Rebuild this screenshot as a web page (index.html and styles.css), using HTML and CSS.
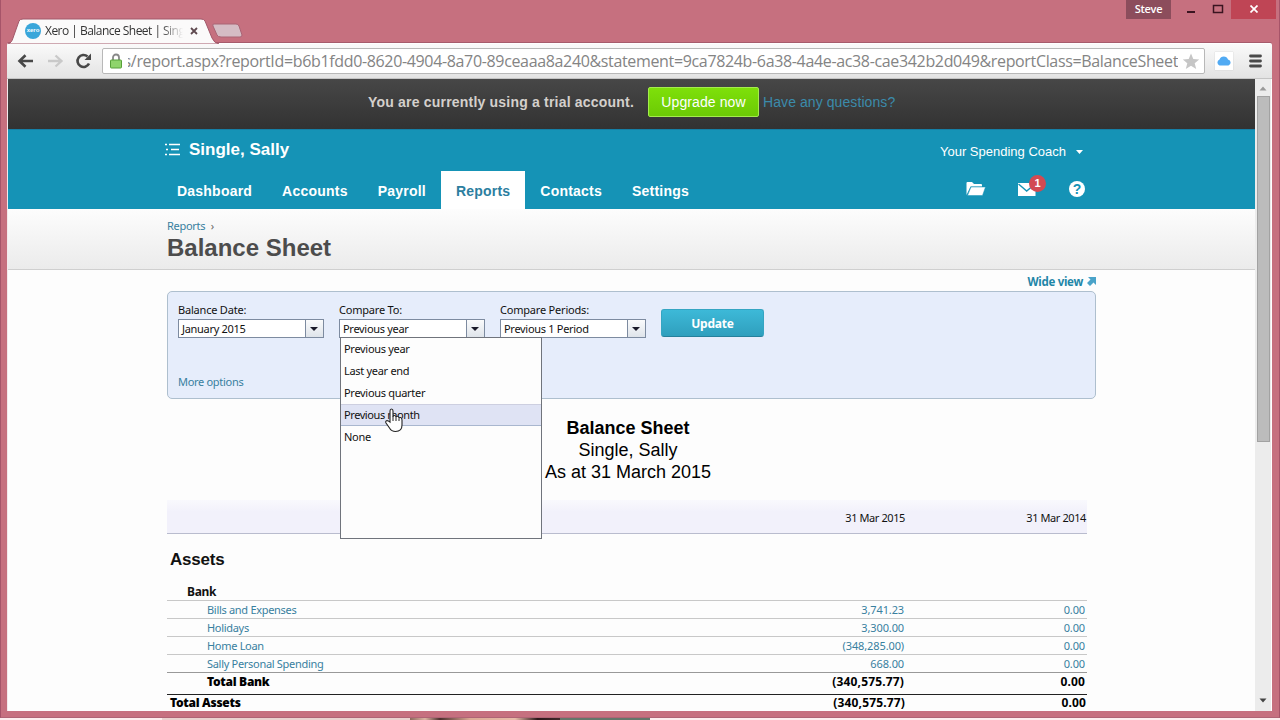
FILE: index.html
```html
<!DOCTYPE html>
<html lang="en">
<head>
  <meta charset="UTF-8">
  <meta name="viewport" content="width=device-width, initial-scale=1.0">
  <title>Xero | Balance Sheet | Single, Sally</title>
  <link rel="stylesheet" href="styles.css">
</head>
<body>

<div class="window">
  <!-- Title bar -->
  <div class="titlebar">
    <svg class="tab-shapes" width="260" height="26" viewBox="0 0 260 26">
      <path d="M0 26 C3 25 4 23 5 20 L11 3 Q12 1 15 1 L193 1 Q196 1 197 3 L204 20 Q206 25 211 26 Z" fill="#fbfafa" stroke="#a2596a" stroke-width="1"/>
      <path d="M206 6 H228 Q230 6 231 8 L234 17 Q234 19 232 19 H213 Q210 19 209 17 L205 8 Q204 6 206 6 Z" fill="#d5bcc4" stroke="#a96475" stroke-width="1"/>
    </svg>
    <div class="tab">
      <span class="favicon">xero</span>
      <span class="tab-title">Xero | Balance Sheet | Single</span>
      <svg class="tab-close" width="8" height="8" viewBox="0 0 8 8"><path d="M1 1 L7 7 M7 1 L1 7" stroke="#5f4a50" stroke-width="1.8"/></svg>
    </div>
    <div class="window-buttons">
      <span class="user">Steve</span>
      <svg width="60" height="18" viewBox="0 0 60 18">
        <path d="M16 12 H24" stroke="#3a1420" stroke-width="2"/>
        <rect x="42.5" y="5.5" width="9" height="7" fill="none" stroke="#3a1420" stroke-width="1.5"/>
      </svg>
      <span class="close"><svg width="8" height="8" viewBox="0 0 8 8"><path d="M0.5 0.5 L7.5 7.5 M7.5 0.5 L0.5 7.5" stroke="#fff" stroke-width="1.7"/></svg></span>
    </div>
  </div>

  <!-- Browser toolbar -->
  <div class="toolbar">
    <svg class="nav-icons" width="86" height="20" viewBox="0 0 86 20">
      <path d="M26 10 H13 M18.500 4.300 L12.500 10 L18.500 15.700" fill="none" stroke="#484848" stroke-width="2.600"/>
      <path d="M41 10 H54 M48.500 4.500 L54.500 10 L48.500 15.500" fill="none" stroke="#c9c9c9" stroke-width="2.300"/>
      <path d="M82 12.500 A6 6 0 1 1 80.500 5.500" fill="none" stroke="#484848" stroke-width="2.600"/>
      <path d="M84 2.500 V9 H77.500 Z" fill="#484848"/>
    </svg>
    <div class="omnibox">
      <svg class="lock" width="12" height="16" viewBox="0 0 12 16">
        <path d="M3 8 V4.500 A3 3 0 0 1 9 4.500 V8" fill="none" stroke="#888" stroke-width="1.800"/>
        <rect x="0.500" y="7" width="11" height="8" rx="0.800" fill="#8fd46c" stroke="#57a03a"/>
      </svg>
      <span class="url"><span>s/report.aspx?reportId=b6b1fdd0-8620-4904-8a70-89ceaaa8a240&amp;statement=9ca7824b-6a38-4a4e-ac38-cae342b2d049&amp;reportClass=BalanceSheet</span></span>
      <svg width="18" height="17" viewBox="0 0 18 17"><path d="M9 0.500 L11.300 6 L17.200 6.400 L12.700 10.200 L14.200 16 L9 12.800 L3.800 16 L5.300 10.200 L0.800 6.400 L6.700 6 Z" fill="#c6c6c6"/></svg>
    </div>
    <span class="cloud">
      <svg width="16" height="12" viewBox="0 0 16 12"><path d="M3.500 10.500 A3.200 3.200 0 0 1 3.500 4.500 A4.500 4.500 0 0 1 12 4.500 A3.100 3.100 0 0 1 12.500 10.500 Z" fill="#51aaf3"/></svg>
    </span>
    <svg class="menu-icon" width="13" height="14" viewBox="0 0 13 14"><path d="M1.500 2 H11.500 M1.500 7 H11.500 M1.500 12 H11.500" stroke="#4a4a4a" stroke-width="2.800" stroke-linecap="round"/></svg>
  </div>

  <div class="viewport">
    <div class="page">
      <div class="trial">
        <span class="trial-text">You are currently using a trial account.</span>
        <a class="upgrade">Upgrade now</a>
        <a class="questions">Have any questions?</a>
      </div>

      <!-- Header -->
      <div class="header">
        <div class="header-top">
          <svg class="list-icon" width="16" height="13" viewBox="0 0 16 13"><path d="M0 1.500 H2 M4 1.500 H15 M1 6.500 H3 M6 6.500 H14 M0 11.500 H2 M4 11.500 H15" stroke="#fff" stroke-width="1.700"/></svg>
          <span class="org">Single, Sally</span>
          <span class="account">Your Spending Coach</span>
          <svg class="account-arrow" width="7" height="4" viewBox="0 0 7 4"><path d="M0 0 H7 L3.500 4 Z" fill="#fff"/></svg>
        </div>
        <div class="nav">
          <a>Dashboard</a>
          <a>Accounts</a>
          <a>Payroll</a>
          <a class="active">Reports</a>
          <a>Contacts</a>
          <a>Settings</a>
          <div class="nav-tools">
            <svg width="20" height="16" viewBox="0 0 20 16"><path d="M0.500 14 V2 Q0.500 1 1.500 1 H6 L8 3 H15 Q16 3 16 4 V5.500 H4.500 Z" fill="#fff"/><path d="M5 6 H19.500 L16.500 14.500 H1.500 Z" fill="#fff" stroke="#1793b6" stroke-width="0.500"/></svg>
            <span class="mail">
              <svg width="18" height="13" viewBox="0 0 18 13"><rect x="0" y="0" width="17.500" height="13" fill="#fff"/><path d="M0.500 1 L8.700 8 L17 1" fill="none" stroke="#1793b6" stroke-width="1.400"/></svg>
              <span class="count">1</span>
            </span>
            <span class="help">?</span>
          </div>
        </div>
      </div>

      <div class="heading">
        <div class="crumb"><a>Reports</a> <span>›</span></div>
        <h1>Balance Sheet</h1>
      </div>

      <div class="content">
        <div class="wide-view">
          <a>Wide view</a>
          <svg width="9" height="9" viewBox="0 0 9 9"><path d="M1 0 H9 V8 L6.500 5.500 L3 9 L0 6 L3.500 2.500 Z" fill="#4aa3c9"/></svg>
        </div>

        <!-- Report options -->
        <div class="options">
          <div class="fields">
            <div class="field">
              <label>Balance Date:</label>
              <div class="select"><span>January 2015</span><i></i></div>
            </div>
            <div class="field">
              <label>Compare To:</label>
              <div class="select"><span>Previous year</span><i></i></div>
              <div class="dropdown">
                <div>Previous year</div>
                <div>Last year end</div>
                <div>Previous quarter</div>
                <div class="selected">Previous month</div>
                <div>None</div>
                <svg class="cursor" width="18" height="25" viewBox="0 0 18 25"><path d="M5 14 V3 Q5 1 6.500 1 Q8 1 8 3 V9 Q8 7.500 9.500 7.500 Q11 7.500 11 9.500 Q11.200 8.300 12.500 8.300 Q14 8.300 14 10.300 Q14.300 9.300 15.500 9.500 Q17 9.800 17 12 V17 Q17 23.500 10.500 23.500 Q6.500 23.500 4.500 20 L1 15 Q0.200 13.300 1.500 12.700 Q2.800 12.200 5 14 Z" fill="#fff" stroke="#222" stroke-width="1.100"/><path d="M8 8.500 V13 M11 9.500 V13 M14 10.500 V13" stroke="#222"/></svg>
              </div>
            </div>
            <div class="field">
              <label>Compare Periods:</label>
              <div class="select"><span>Previous 1 Period</span><i></i></div>
            </div>
            <button class="update">Update</button>
          </div>
          <a class="more">More options</a>
        </div>

        <div class="report-title">
          <b>Balance Sheet</b>
          <span>Single, Sally</span>
          <span class="as-at">As at 31 March 2015</span>
        </div>

        <!-- Report -->
        <div class="report">
          <div class="row columns"><span></span><span>31 Mar 2015</span><span>31 Mar 2014</span></div>
          <h2>Assets</h2>
          <h3>Bank</h3>
          <div class="row"><a>Bills and Expenses</a><span>3,741.23</span><span>0.00</span></div>
          <div class="row"><a>Holidays</a><span>3,300.00</span><span>0.00</span></div>
          <div class="row"><a>Home Loan</a><span>(348,285.00)</span><span>0.00</span></div>
          <div class="row"><a>Sally Personal Spending</a><span>668.00</span><span>0.00</span></div>
          <div class="row subtotal"><b>Total Bank</b><span>(340,575.77)</span><span>0.00</span></div>
          <div class="row total"><b>Total Assets</b><span>(340,575.77)</span><span>0.00</span></div>
        </div>
      </div>
    </div>
    <div class="scrollbar">
      <svg width="8" height="5" viewBox="0 0 8 5"><path d="M4 0.500 L7.500 4.500 H0.500 Z" fill="#999"/></svg>
      <div class="thumb"></div>
      <svg class="down" width="8" height="5" viewBox="0 0 8 5"><path d="M0.500 0.500 H7.500 L4 4.500 Z" fill="#444"/></svg>
    </div>
  </div>
</div>
<div class="desktop"><i class="strip-pink"></i><i class="strip-photo"></i><i class="strip-green"></i></div>

</body>
</html>
```
FILE: styles.css
```css
* {
  box-sizing: border-box;
}

body {
  margin: 0;
  width: 1280px;
  height: 720px;
  overflow: hidden;
  background-color: #fbecec;
  font-family: "Noto Sans", sans-serif;
  font-size: 11px;
  color: #111;
}

.window {
  height: 718px;
  padding: 0 7px 6px 6px;
  background-color: #c6707f;
  border-left: 1px solid #a65469;
  border-right: 1px solid #a65469;
  border-bottom: 1px solid #b06475;
}

.titlebar {
  position: relative;
  display: flex;
  justify-content: space-between;
  height: 43px;
}

.tab-shapes {
  position: absolute;
  left: 1px;
  top: 18px;
}

.tab {
  position: relative;
  display: flex;
  align-items: center;
  margin: 19px 0 0 18px;
  width: 174px;
  height: 24px;
}

.favicon {
  width: 16px;
  height: 16px;
  border-radius: 50%;
  background-color: #3aa6da;
  color: #fff;
  font: bold 6px/15px "Liberation Sans", sans-serif;
  text-align: center;
}

.tab-title {
  width: 138px;
  margin-left: 4px;
  overflow: hidden;
  white-space: nowrap;
  font: 12px/18px "Open Sans", sans-serif;
  letter-spacing: -0.53px;
  color: #333;
  -webkit-mask-image: linear-gradient(to right, #000 84%, transparent);
  mask-image: linear-gradient(to right, #000 84%, transparent);
}

.tab-close {
  margin-left: 7px;
}

.window-buttons {
  display: flex;
  align-items: flex-start;
  margin-right: -4px;
}

.user {
  width: 45px;
  height: 19px;
  background-color: #8c4d5c;
  color: #fff;
  font: 600 11px/18px "Open Sans", sans-serif;
  text-align: center;
  letter-spacing: -0.3px;
}

.close {
  width: 45px;
  height: 19px;
  background-color: #bf4555;
  text-align: center;
  line-height: 17px;
}

.toolbar {
  display: flex;
  align-items: center;
  height: 36px;
  background: linear-gradient(#fafafa, #e3e3e3);
  border-top: 1px solid #fff;
  border-bottom: 1px solid #c4c4c4;
  box-shadow: 0 -1px 0 #a65b6c;
  border-radius: 2px 2px 0 0;
}

.nav-icons {
  margin-right: 9px;
}

.omnibox {
  display: flex;
  align-items: center;
  width: 1103px;
  height: 26px;
  padding: 0 4px 0 7px;
  background-color: #fff;
  border: 1px solid #b8b8b8;
  border-radius: 2px;
}

.lock {
  flex: none;
}

.url {
  display: flex;
  justify-content: flex-end;
  width: 1050px;
  height: 24px;
  margin: 0 4px 0 6px;
  overflow: hidden;
  white-space: nowrap;
  font: 16px/24px "Open Sans", sans-serif;
  letter-spacing: -0.345px;
  color: #848484;
}

.cloud {
  display: flex;
  align-items: center;
  justify-content: center;
  width: 18px;
  height: 18px;
  margin: 0 16px 0 10px;
  background-color: #fff;
  box-shadow: 0 0 1px #bbb;
}

.viewport {
  display: flex;
  height: 632px;
  background-color: #fdfdfd;
  border-left: 1px solid #f4e9ec;
  overflow: hidden;
}

.page {
  width: 1247px;
}

.trial {
  display: flex;
  align-items: center;
  height: 50px;
  padding: 0 0 4px 360px;
  background: linear-gradient(#474747, #323232);
  font-family: "Liberation Sans", sans-serif;
  font-size: 14px;
}

.trial-text {
  width: 280px;
  font-weight: bold;
  letter-spacing: 0.2px;
  color: #d4d0cc;
}

.upgrade {
  width: 111px;
  height: 30px;
  background: linear-gradient(#7ee00a, #6cca05);
  border: 1px solid #a4ed4d;
  border-radius: 2px;
  line-height: 28px;
  letter-spacing: 0.1px;
  text-align: center;
}

.header {
  height: 80px;
  padding-left: 154px;
  background-color: #1593b6;
  border-top: 1px solid #157fa6;
  font-family: "Liberation Sans", sans-serif;
  color: #fff;
}

.header-top {
  display: flex;
  align-items: center;
  width: 921px;
  height: 41px;
  padding: 0 0 2px 3px;
}

.org {
  margin-left: 8px;
  font-size: 17px;
  font-weight: bold;
}

.account {
  margin: 4px 10px 0 auto;
  font-size: 13px;
}

.account-arrow {
  margin-top: 4px;
}

.nav {
  display: flex;
  width: 931px;
  height: 38px;
  font-size: 14px;
  font-weight: bold;
  line-height: 41px;
}

.nav a {
  padding: 0 15px;
  letter-spacing: 0.22px;
}

.nav-tools {
  display: flex;
  align-items: center;
  margin: 0 8px 2px auto;
}

.mail {
  position: relative;
  display: flex;
  margin: 0 33px 0 32px;
}

.count {
  position: absolute;
  left: 11px;
  top: -8px;
  width: 17px;
  height: 17px;
  border-radius: 50%;
  background-color: #d24a52;
  font-size: 11px;
  line-height: 16px;
  text-align: center;
}

.help {
  width: 16px;
  height: 16px;
  border-radius: 50%;
  background-color: #fff;
  color: #1593b6;
  font-size: 14px;
  line-height: 16px;
  text-align: center;
}

.heading {
  height: 61px;
  padding: 9px 0 0 159px;
  background: linear-gradient(#fdfdfd, #ebebeb);
  border-bottom: 1px solid #cfcfcf;
}

.crumb {
  height: 16px;
  line-height: 16px;
  letter-spacing: -0.3px;
  color: #666;
}

.crumb span {
  margin-left: 3px;
}

a {
  color: #38809f;
}

.nav a,
.upgrade {
  color: #fff;
}

.nav .active {
  background-color: #fff;
  color: #2b7e9f;
}

.questions {
  margin-left: 4px;
  letter-spacing: 0.08px;
  color: #3b8bab;
}

h1 {
  margin: 0;
  font: bold 24px/28px "Liberation Sans", sans-serif;
  color: #4c4c4c;
}

.content {
  width: 929px;
  margin-left: 159px;
}

.wide-view {
  display: flex;
  align-items: center;
  justify-content: flex-end;
  gap: 4px;
  height: 21px;
  padding-top: 1px;
  font-weight: bold;
}

.wide-view a {
  color: #1f86a8;
  font-size: 11.5px;
  letter-spacing: -0.3px;
}

.options {
  height: 108px;
  padding: 11px 10px 0;
  background-color: #e6edfb;
  border: 1px solid #aebfce;
  border-radius: 5px;
  letter-spacing: -0.3px;
}

.fields {
  display: flex;
  height: 70px;
  gap: 15px;
}

.field {
  position: relative;
  width: 146px;
}

.field label {
  display: block;
  height: 16px;
  line-height: 13px;
  letter-spacing: -0.2px;
}

.select {
  display: flex;
  width: 146px;
  height: 19px;
  background-color: #fff;
  border: 1px solid #7d8ba0;
}

.select span {
  flex: 1;
  padding-left: 3px;
  line-height: 18px;
}

.select i {
  width: 18px;
  padding: 7px 0 0 4px;
  background: linear-gradient(#fafbfc, #dfe4ea);
  border-left: 1px solid #7d8ba0;
}

.select i::before {
  content: "";
  display: block;
  width: 0;
  border: 4px solid transparent;
  border-top-color: #1a1a2a;
  border-bottom: 0;
}

.dropdown {
  position: absolute;
  z-index: 2;
  left: 1px;
  top: 34px;
  width: 202px;
  height: 202px;
  background-color: #fdfdfd;
  border: 1px solid #70747c;
}

.dropdown div {
  height: 22px;
  padding-left: 3px;
  line-height: 22px;
}

.dropdown .selected {
  background-color: #dfe3f4;
  border-top: 1px solid #cdcfe0;
  border-bottom: 1px solid #a9b7cf;
  letter-spacing: -0.42px;
  line-height: 20px;
}

.cursor {
  position: absolute;
  left: 44px;
  top: 70px;
}

.update {
  width: 103px;
  height: 28px;
  margin-top: 6px;
  padding: 0;
  background: linear-gradient(#3db9d8, #2f9fbd);
  border: 1px solid #35a5c2;
  border-bottom-color: #25809b;
  border-radius: 3px;
  color: #fff;
  font: bold 12px/28px "Noto Sans", sans-serif;
  letter-spacing: -0.2px;
}

.more {
  display: block;
  line-height: 18px;
}

.report-title {
  display: flex;
  flex-direction: column;
  align-items: center;
  width: 922px;
  height: 101px;
  padding-top: 18px;
  font: 18px/22px "Liberation Sans", sans-serif;
  color: #000;
}

.report {
  width: 920px;
}

.row {
  display: flex;
  height: 18px;
  padding: 0 2px 0 40px;
  border-top: 1px solid #c8c8c8;
  line-height: 18px;
}

.row > :first-child {
  flex: 1;
  letter-spacing: -0.3px;
}

.row > span {
  width: 181px;
  color: #38809f;
  letter-spacing: -0.12px;
  text-align: right;
}

.row > :first-child + span {
  width: 180px;
}

.columns {
  height: 34px;
  padding: 0 1px 0 0;
  background: linear-gradient(#f9f9fd, #f2f1fb 12px);
  border-top: 0;
  border-bottom: 1px solid #b9bcce;
  line-height: 36px;
}

.columns > span {
  color: #111;
  letter-spacing: -0.4px;
}

h2 {
  height: 48px;
  margin: 0;
  padding-left: 3px;
  font: bold 17px/51px "Liberation Sans", sans-serif;
  letter-spacing: -0.2px;
}

h3 {
  height: 18px;
  margin: 0;
  padding-left: 20px;
  font-size: 12px;
  line-height: 20px;
  letter-spacing: -0.3px;
}

.subtotal {
  height: 22px;
  border-top-color: #999;
  line-height: 17px;
}

.total {
  padding: 0 1px 0 3px;
  border-top-color: #222;
  line-height: 16px;
}

.subtotal,
.subtotal > span,
.total,
.total > span {
  color: #000;
  font-size: 12px;
  font-weight: bold;
  letter-spacing: 0.15px;
}

.subtotal > b,
.total > b {
  letter-spacing: -0.4px;
}

.scrollbar {
  display: flex;
  flex-direction: column;
  align-items: center;
  width: 17px;
  padding: 7px 0 8px;
  background-color: #ececec;
  border-right: 1px solid #fff;
}

.thumb {
  width: 13px;
  height: 346px;
  margin-top: 5px;
  background-color: #bcbcbc;
  border: 1px solid #a2a2a2;
}

.down {
  margin-top: auto;
}

.desktop {
  display: flex;
  height: 2px;
  padding-left: 162px;
  background-color: #fdeeee;
}

.strip-pink {
  width: 248px;
  background-color: #ead2cf;
}

.strip-photo {
  width: 150px;
  background: linear-gradient(to right, #8d6a5e, #dcb4a2 10%, #4b2f2d 20%, #dba994 40%, #e8bca9 70%, #2a1719 85%, #41292b);
}

.strip-green {
  width: 90px;
  background-color: #64766a;
}
```
